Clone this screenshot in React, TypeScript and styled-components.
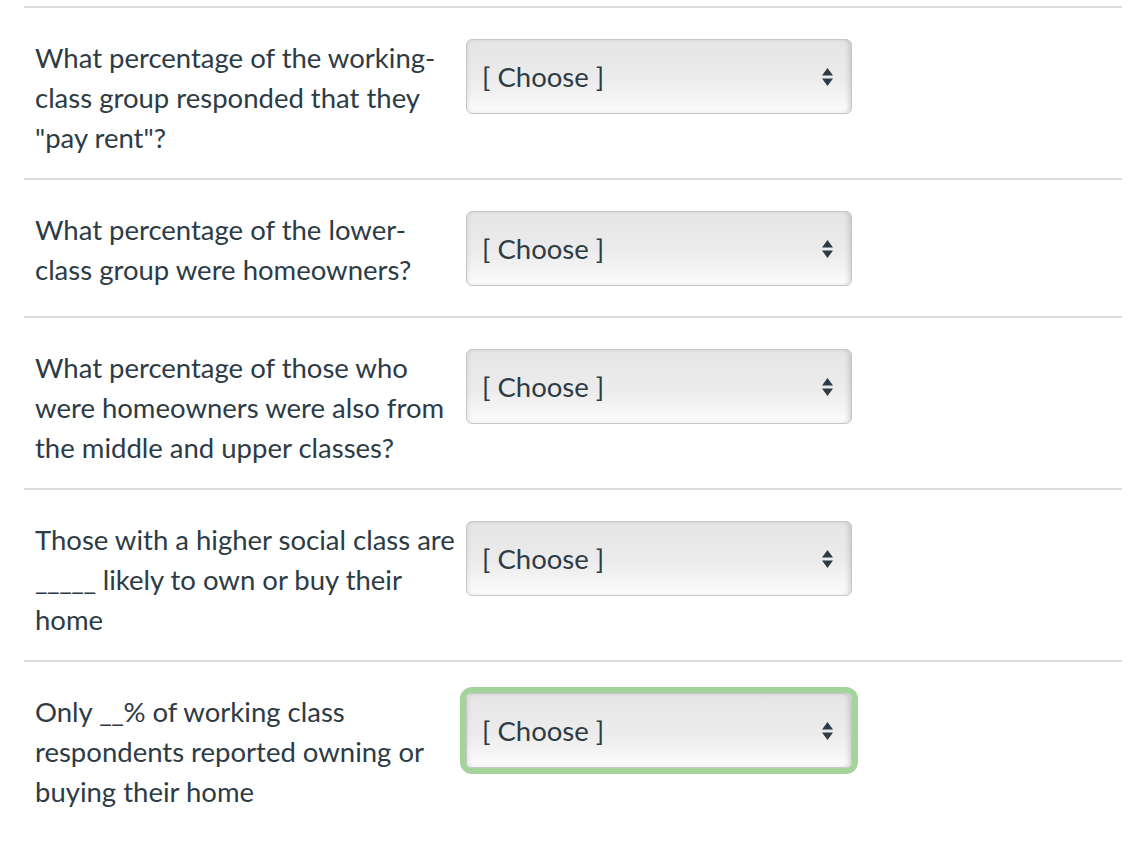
import React from 'react';
import styled, { createGlobalStyle } from 'styled-components';

const GlobalStyle = createGlobalStyle`
  body {
    margin: 0;
    background: #fff;
    font-family: Lato, "Noto Sans", sans-serif;
    color: #2d3b45;
  }
`;

const Quiz = styled.div`
  margin-left: 24px;
  width: 1098px;
  padding-top: 6px;
`;

const Row = styled.div`
  display: flex;
  align-items: flex-start;
  border-top: 2px solid #dcdcdc;
  padding: 30px 0 20px 11px;
`;

const Question = styled.div`
  width: 424px;
  font-size: 27.5px;
  line-height: 40px;
  margin-right: 7px;
`;

const Blank = styled.span`
  letter-spacing: -0.5px;
`;

const SelectWrap = styled.div<{ focused?: boolean }>`
  position: relative;
  width: 386px;
  height: 75px;
  margin: 1px 0 10px;
  box-sizing: border-box;
  border: 1px solid #c6c6c6;
  border-radius: 6px;
  background: linear-gradient(to bottom, #e5e5e5 0%, #ececec 55%, #fbfbfb 100%);
  box-shadow: inset 3px 0 4px -2px rgba(0, 0, 0, 0.08), inset -4px 0 5px -2px rgba(0, 0, 0, 0.15),
    ${({ focused }) => (focused ? '0 0 0 6px #a4d49b' : '0 0 0 0 transparent')};
`;

const Select = styled.select`
  appearance: none;
  -webkit-appearance: none;
  width: 100%;
  height: 100%;
  border: none;
  background: transparent;
  font-family: Lato, "Noto Sans", sans-serif;
  font-size: 27.5px;
  color: #2d3b45;
  padding: 0 40px 0 15px;
  outline: none;
`;

const Arrows = styled.svg`
  position: absolute;
  right: 18px;
  top: 50%;
  transform: translateY(-50%);
  pointer-events: none;
`;

const questions: { text: React.ReactNode }[] = [
  { text: <>What percentage of the working-class group responded that they "pay rent"?</> },
  { text: <>What percentage of the lower-class group were homeowners?</> },
  { text: <>What percentage of those who were homeowners were also from the middle and upper classes?</> },
  { text: <>Those with a higher social class are <Blank>_____</Blank> likely to own or buy their home</> },
  { text: <>Only <Blank>__</Blank>% of working class respondents reported owning or buying their home</> },
];

const ChooseBox = ({ focused }: { focused?: boolean }) => (
  <SelectWrap focused={focused}>
    <Select defaultValue="">
      <option value="">[ Choose ]</option>
    </Select>
    <Arrows width="11" height="18" viewBox="0 0 11 18">
      <path d="M5.5 0 L11 7.5 L0 7.5 Z" fill="#2d3b45" />
      <path d="M0 10.5 L11 10.5 L5.5 18 Z" fill="#2d3b45" />
    </Arrows>
  </SelectWrap>
);

export default function App() {
  return (
    <>
      <GlobalStyle />
      <Quiz>
        {questions.map((q, i) => (
          <Row key={i}>
            <Question>{q.text}</Question>
            <ChooseBox focused={i === questions.length - 1} />
          </Row>
        ))}
      </Quiz>
    </>
  );
}
